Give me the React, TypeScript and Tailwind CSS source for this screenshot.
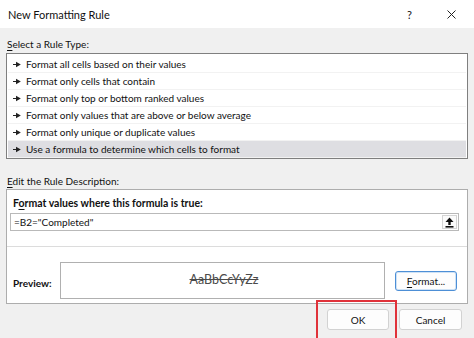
import React from "react";

const rows = [
  "Format all cells based on their values",
  "Format only cells that contain",
  "Format only top or bottom ranked values",
  "Format only values that are above or below average",
  "Format only unique or duplicate values",
  "Use a formula to determine which cells to format",
];

function Arrow() {
  return (
    <svg width="8" height="7" viewBox="0 0 8 7" className="shrink-0">
      <line x1="0" y1="3.5" x2="4" y2="3.5" stroke="#222" strokeWidth="1" />
      <polygon points="3,0.8 7.8,3.5 3,6.2" fill="#222" />
    </svg>
  );
}

export default function App() {
  return (
    <div
      className="relative w-[474px] h-[338px] overflow-hidden bg-[#f0f0f0] text-[#111]"
      style={{ fontFamily: 'Lato, "Noto Sans", sans-serif' }}
    >
      {/* title bar */}
      <div className="flex h-[28px] items-center bg-white pl-[8px]">
        <span className="text-[11px] leading-none">New Formatting Rule</span>
        <span className="ml-auto mr-[35px] text-[11px] leading-none">?</span>
        <svg width="9" height="9" viewBox="0 0 9 9" className="mr-[18px]">
          <path d="M0.5 0.5 L8.5 8.5 M8.5 0.5 L0.5 8.5" stroke="#222" strokeWidth="1" />
        </svg>
      </div>

      <div className="px-[6px] text-[10px]">
        <div className="mt-[9px] h-[14px] leading-[14px] pl-[1px]">
          <span className="underline underline-offset-2">S</span>elect a Rule Type:
        </div>
        <div className="mt-[2px] h-[106px] w-[462px] border border-[#7f7f7f] bg-white pt-[2px]">
          {rows.map((r, i) => (
            <div
              key={i}
              className={
                "mx-[1px] flex h-[17px] items-center gap-[5px] pl-[5px] border-b border-[#f2f2f2] " +
                (i === 5 ? "bg-[#dedee2]" : "")
              }
            >
              <Arrow />
              <span className="leading-none">{r}</span>
            </div>
          ))}
        </div>

        <div className="mt-[15px] h-[14px] leading-[14px] pl-[1px]">
          <span className="underline underline-offset-2">E</span>dit the Rule Description:
        </div>

        <div className="mt-[1px] h-[115px] w-[462px] border border-[#adadad] bg-white">
          <div className="pl-[6px] pt-[6px] h-[18px] text-[10.5px] font-bold leading-[14px]">
            F<span className="underline underline-offset-2">o</span>rmat values where this formula is true:
          </div>
          <div className="ml-[3px] mt-[5px] flex h-[18px] w-[449px] items-center border border-[#b9b9b9] bg-white">
            <span className="pl-[3px] leading-none">=B2="Completed"</span>
            <div className="ml-auto mr-[1px] flex h-[14px] w-[15px] items-center justify-center border border-[#d4d4d4] bg-[#fbfbfb]">
              <svg width="9" height="11" viewBox="0 0 9 11">
                <polygon points="4.5,0.5 8.5,5 0.5,5" fill="#111" />
                <rect x="3.3" y="4.5" width="2.4" height="3.5" fill="#111" />
                <rect x="0.5" y="9" width="8" height="1.6" fill="#111" />
              </svg>
            </div>
          </div>
          <div className="mt-[15px] h-px w-full bg-[#dcdcdc]" />
          <div className="flex items-start">
            <div className="mt-[29px] pl-[6px] font-bold leading-[14px] w-[53px]">Preview:</div>
            <div className="mt-[15px] flex h-[37px] w-[325px] items-center justify-center border border-[#b0b0b0] bg-white">
              <span className="ml-[3px] text-[12.5px] text-[#4a4a4a] line-through leading-none">AaBbCcYyZz</span>
            </div>
            <div className="ml-[10px] mt-[24px] flex h-[20px] w-[62px] items-center justify-center rounded-[3px] border border-[#4d8fd6] bg-[#fdfdfd] shadow-[inset_0_0_0_1px_#cfe2f5]">
              <span className="leading-none">
                <span className="underline underline-offset-2">F</span>ormat...
              </span>
            </div>
          </div>
        </div>

        <div className="mt-[5px] flex justify-end pr-[6px] gap-[10px]">
          <div className="flex h-[21px] w-[62px] items-center justify-center rounded-[3px] border border-[#d2d2d2] bg-[#fdfdfd] leading-none">
            OK
          </div>
          <div className="flex h-[21px] w-[63px] items-center justify-center rounded-[3px] border border-[#d2d2d2] bg-[#fdfdfd] leading-none">
            Cancel
          </div>
        </div>
      </div>

      {/* highlight */}
      <div className="absolute left-[316px] top-[300px] h-[40px] w-[81px] border-2 border-[#e0323a]" />
    </div>
  );
}
